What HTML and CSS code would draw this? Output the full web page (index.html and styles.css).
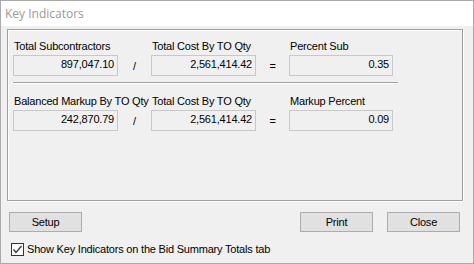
FILE: index.html
```html
<!DOCTYPE html>
<html lang="en">
	<head>
		<meta charset="UTF-8">
		<title>Key Indicators</title>
		<link rel="stylesheet" href="styles.css">
	</head>
	<body>
		<div class="window">
			<div class="titlebar">Key Indicators</div>
			<div class="client">
				<div class="panel">
					<div class="calc">
						<div class="field f1">
							<div class="label">Total Subcontractors</div>
							<div class="value">897,047.10</div>
						</div>
						<div class="op">/</div>
						<div class="field f2">
							<div class="label">Total Cost By TO Qty</div>
							<div class="value">2,561,414.42</div>
						</div>
						<div class="op">=</div>
						<div class="field f3">
							<div class="label">Percent Sub</div>
							<div class="value">0.35</div>
						</div>
					</div>
					<div class="sep"></div>
					<div class="calc">
						<div class="field f1">
							<div class="label">Balanced Markup By TO Qty</div>
							<div class="value">242,870.79</div>
						</div>
						<div class="op">/</div>
						<div class="field f2">
							<div class="label">Total Cost By TO Qty</div>
							<div class="value">2,561,414.42</div>
						</div>
						<div class="op">=</div>
						<div class="field f3">
							<div class="label">Markup Percent</div>
							<div class="value">0.09</div>
						</div>
					</div>
				</div>
				<div class="buttons">
					<button class="btn setup">Setup</button>
					<button class="btn">Print</button>
					<button class="btn">Close</button>
				</div>
				<label class="check">
					<span class="box">
						<svg width="11" height="11" viewBox="0 0 11 11"><polyline points="1.5,5.5 4,8.5 9.5,2" fill="none" stroke="#333" stroke-width="1.3"/></svg>
					</span>
					Show Key Indicators on the Bid Summary Totals tab
				</label>
			</div>
		</div>
	</body>
</html>
```

FILE: styles.css
```css
body {
	margin: 0;
	font-family: "Liberation Sans", Arial, sans-serif;
	font-size: 11px;
	letter-spacing: -0.2px;
	color: #000;
}
.window {
	width: 474px;
	height: 264px;
	box-sizing: border-box;
	border: 1px solid #aaa;
	display: flex;
	flex-direction: column;
}
.titlebar {
	height: 25px;
	line-height: 25px;
	padding-left: 4px;
	background-color: #fff;
	color: #999;
	font-family: "Open Sans", sans-serif;
	font-size: 12px;
	letter-spacing: 0;
}
.client {
	flex: 1;
	background-color: #f0f0f0;
	padding: 3px 0 0 6px;
}
.panel {
	width: 456px;
	height: 172px;
	box-sizing: border-box;
	border: 1px solid #a0a0a0;
	box-shadow: 1px 1px 0 #fff, inset 1px 1px 0 #fff;
	padding: 10px 0 0 5px;
}
.calc {
	display: flex;
}
.f1, .f2 {
	width: 105px;
}
.f3 {
	width: 104px;
}
.label {
	line-height: 13px;
	height: 13px;
	margin-bottom: 2px;
	padding-left: 1px;
	white-space: nowrap;
}
.value {
	height: 21px;
	box-sizing: border-box;
	border: 1px solid #c8c8c8;
	line-height: 17px;
	padding-right: 3px;
	text-align: right;
}
.op {
	width: 33px;
	align-self: flex-end;
	line-height: 19px;
	text-align: center;
}
.sep {
	width: 385px;
	border-top: 1px solid #a0a0a0;
	border-bottom: 1px solid #fff;
	margin: 6px 0 11px;
}
.buttons {
	display: flex;
	gap: 14px;
	margin: 11px 13px 0 2px;
}
.btn {
	width: 73px;
	height: 20px;
	padding: 0;
	border: 1px solid #adadad;
	background-color: #e1e1e1;
	font-family: "Liberation Sans", Arial, sans-serif;
	font-size: 11px;
	letter-spacing: -0.2px;
	color: #000;
}
.setup {
	margin-right: auto;
}
.check {
	display: flex;
	align-items: center;
	gap: 3px;
	margin: 11px 0 0 4px;
	line-height: 13px;
}
.box {
	width: 13px;
	height: 13px;
	box-sizing: border-box;
	border: 1px solid #333;
	background-color: #fff;
	display: flex;
	align-items: center;
	justify-content: center;
}
```
